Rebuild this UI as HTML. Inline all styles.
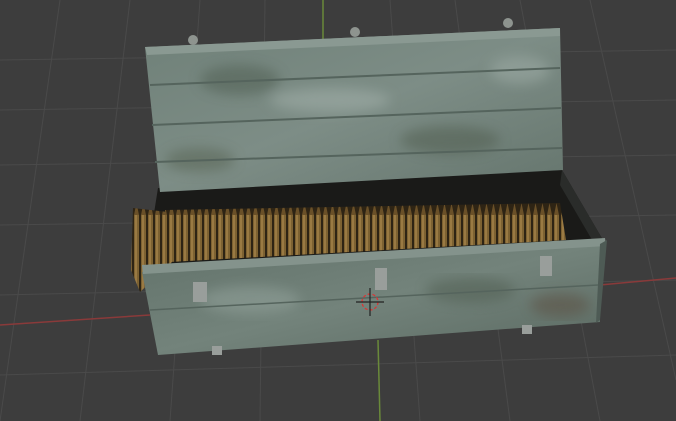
<!DOCTYPE html>
<html><head><meta charset="utf-8"><style>
html,body{margin:0;padding:0;background:#3d3d3d;overflow:hidden}
svg{display:block}
</style></head><body>
<svg width="676" height="421" viewBox="0 0 676 421" xmlns="http://www.w3.org/2000/svg">
<defs>
<linearGradient id="lid" x1="0" y1="0" x2="1" y2="1">
<stop offset="0" stop-color="#6f8078"/><stop offset="0.5" stop-color="#7d8d86"/><stop offset="1" stop-color="#65756d"/>
</linearGradient>
<linearGradient id="front" x1="0" y1="0" x2="1" y2="1">
<stop offset="0" stop-color="#62726a"/><stop offset="0.5" stop-color="#73837b"/><stop offset="1" stop-color="#5b6a62"/>
</linearGradient>
<pattern id="bul" x="0" y="203" width="7" height="120" patternUnits="userSpaceOnUse">
<rect width="7" height="120" fill="#2e2414"/>
<rect x="1" y="12" width="5" height="108" fill="#7d6232"/>
<rect x="2" y="12" width="2" height="108" fill="#9a7a43"/>
<polygon points="1,12 3.5,0 6,12" fill="#6a5028"/>
</pattern>
<filter id="bl"><feGaussianBlur stdDeviation="6"/></filter>
</defs>
<rect width="676" height="421" fill="#3d3d3d"/>
<g stroke="#4a4a4a" stroke-width="1">
<line x1="0" y1="60" x2="676" y2="50"/><line x1="0" y1="110" x2="676" y2="100"/>
<line x1="0" y1="165" x2="676" y2="155"/><line x1="0" y1="225" x2="676" y2="215"/>
<line x1="0" y1="295" x2="676" y2="280"/><line x1="0" y1="375" x2="676" y2="355"/>
<line x1="60" y1="0" x2="0" y2="421"/><line x1="130" y1="0" x2="80" y2="421"/>
<line x1="200" y1="0" x2="170" y2="421"/><line x1="265" y1="0" x2="260" y2="421"/>
<line x1="390" y1="0" x2="420" y2="421"/><line x1="455" y1="0" x2="510" y2="421"/>
<line x1="520" y1="0" x2="600" y2="421"/><line x1="590" y1="0" x2="676" y2="380"/>
</g>
<line x1="323" y1="0" x2="323" y2="60" stroke="#6a8a3a" stroke-width="1.5"/>
<line x1="378" y1="340" x2="380" y2="421" stroke="#6a8a3a" stroke-width="1.5"/>
<line x1="0" y1="325" x2="150" y2="315" stroke="#8a3a3a" stroke-width="1.5"/>
<line x1="600" y1="285" x2="676" y2="278" stroke="#8a3a3a" stroke-width="1.5"/>
<polygon points="158,188 562,170 603,240 145,270" fill="#1a1a18"/>
<polygon points="562,170 603,240 595,245 560,185" fill="#2a2c2a"/>
<polygon points="145,47 560,28 563,170 160,192" fill="url(#lid)"/>
<g filter="url(#bl)" opacity="0.5">
<ellipse cx="240" cy="80" rx="40" ry="15" fill="#4d5b50"/>
<ellipse cx="450" cy="140" rx="50" ry="14" fill="#4f5c4e"/>
<ellipse cx="330" cy="100" rx="60" ry="12" fill="#a6b3ad"/>
<ellipse cx="200" cy="160" rx="35" ry="12" fill="#55604f"/>
<ellipse cx="520" cy="70" rx="30" ry="14" fill="#a0aea8"/>
</g>
<g stroke="#55645d" stroke-width="2" fill="none">
<line x1="150" y1="85" x2="560" y2="68"/><line x1="152" y1="125" x2="561" y2="108"/>
<line x1="155" y1="162" x2="562" y2="148"/>
</g>
<polygon points="145,47 560,28 560,36 147,55" fill="#8a9992"/>
<circle cx="193" cy="40" r="5" fill="#8e948f"/><circle cx="355" cy="32" r="5" fill="#8e948f"/><circle cx="508" cy="23" r="5" fill="#8e948f"/>
<polygon points="165,210 560,203 566,240 170,262" fill="url(#bul)"/>
<polygon points="133,208 168,212 172,262 140,292 131,270" fill="url(#bul)"/>
<polygon points="142,272 600,244 600,322 158,355" fill="url(#front)"/>
<g filter="url(#bl)" opacity="0.45">
<ellipse cx="250" cy="300" rx="50" ry="14" fill="#9aa9a2"/>
<ellipse cx="470" cy="290" rx="45" ry="13" fill="#4b584c"/>
<ellipse cx="560" cy="305" rx="30" ry="12" fill="#5a4a3a"/>
</g>
<polygon points="142,265 605,238 606,246 143,274" fill="#84938c"/>
<polygon points="600,244 607,240 600,320 596,323" fill="#4e5b55"/>
<line x1="150" y1="310" x2="598" y2="285" stroke="#55645d" stroke-width="1.5"/>
<rect x="193" y="282" width="14" height="20" fill="#999e9b"/>
<rect x="375" y="268" width="12" height="22" fill="#999e9b"/>
<rect x="540" y="256" width="12" height="20" fill="#999e9b"/>
<rect x="212" y="346" width="10" height="9" fill="#999e9b"/>
<rect x="522" y="325" width="10" height="9" fill="#999e9b"/>
<g stroke-width="1.2" fill="none">
<circle cx="370" cy="302" r="8" stroke-dasharray="3 2" stroke="#d33"/>
<line x1="370" y1="288" x2="370" y2="316" stroke="#222"/><line x1="356" y1="302" x2="384" y2="302" stroke="#222"/>
</g>
</svg>
</body></html>
